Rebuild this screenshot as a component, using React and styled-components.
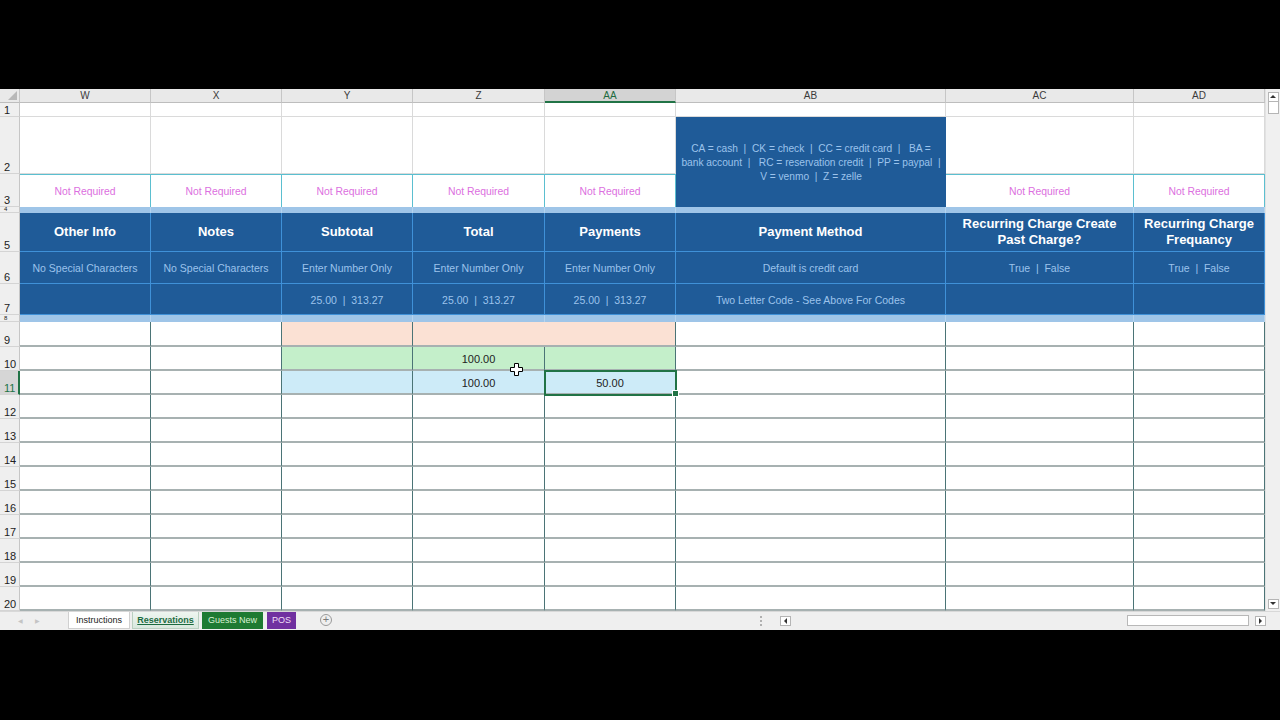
import React from 'react';
import styled, { createGlobalStyle, css } from 'styled-components';

const GlobalStyle = createGlobalStyle`
  html, body { margin: 0; padding: 0; background: #000; }
  body { font-family: "Liberation Sans", Arial, sans-serif; }
  * { box-sizing: border-box; }
`;

const COLS = ['W', 'X', 'Y', 'Z', 'AA', 'AB', 'AC', 'AD'];

const headers = [
  'Other Info', 'Notes', 'Subtotal', 'Total', 'Payments', 'Payment Method',
  'Recurring Charge Create Past Charge?', 'Recurring Charge Frequancy',
];
const hints = [
  'No Special Characters', 'No Special Characters', 'Enter Number Only', 'Enter Number Only',
  'Enter Number Only', 'Default is credit card', 'True  |  False', 'True  |  False',
];
const samples = ['', '', '25.00  |  313.27', '25.00  |  313.27', '25.00  |  313.27', 'Two Letter Code - See Above For Codes', '', ''];

const Screen = styled.div`
  width: 1280px;
  height: 720px;
  background: #000;
  padding-top: 89px;
  overflow: hidden;
`;

const Workbook = styled.div`
  position: relative;
  width: 1280px;
  height: 541px;
  background: #fff;
  display: flex;
  flex-direction: column;
`;

const SheetArea = styled.div`
  display: flex;
  height: 522px;
`;

const Grid = styled.div`
  display: grid;
  grid-template-columns: 20px 131px 131px 131px 132px 131px 270px 188px 131px;
  grid-template-rows: 14px 14px 57px 33px 6px 39px 32px 31px 7px 25px 24px 24px repeat(9, 24px);
  width: 1265px;
  overflow: hidden;
`;

const Corner = styled.div`
  background: #e9e9e9;
  border-right: 1px solid #c6c6c6;
  border-bottom: 1px solid #bdbdbd;
  position: relative;
  &::after {
    content: '';
    position: absolute;
    right: 2px;
    bottom: 2px;
    border-left: 9px solid transparent;
    border-bottom: 9px solid #b8b8b8;
  }
`;

const ColHead = styled.div`
  background: ${p => (p.$active ? '#d3d3d3' : '#e9e9e9')};
  color: ${p => (p.$active ? '#1d6b40' : '#3a3a3a')};
  border-right: 1px solid #c6c6c6;
  border-bottom: ${p => (p.$active ? '2px solid #217346' : '1px solid #bdbdbd')};
  font-size: 10px;
  display: flex;
  align-items: center;
  justify-content: center;
  line-height: 1;
  padding-top: 1px;
`;

const RowHead = styled.div`
  background: ${p => (p.$active ? '#d6d6d6' : '#efefef')};
  color: ${p => (p.$active ? '#217346' : '#222')};
  border-right: ${p => (p.$active ? '2px solid #217346' : '1px solid #c6c6c6')};
  border-bottom: 1px solid #d4d4d4;
  display: flex;
  align-items: flex-end;
  padding-left: 4px;
  overflow: hidden;
  ${p => (p.$tiny
    ? css`
        font-size: 6px;
        line-height: 5px;
      `
    : css`
        font-size: 11px;
        line-height: 12px;
      `)}
`;

const Blank = styled.div`
  border-right: 1px solid #dadada;
  border-bottom: 1px solid #dadada;
`;

const Required = styled.div`
  border-top: 1px solid #5bbfd0;
  border-right: 1px solid #5bbfd0;
  color: #dc6fe0;
  font-size: 10.4px;
  display: flex;
  align-items: center;
  justify-content: center;
`;

const Band = styled.div`
  background: #9fc5e8;
  border-right: 1px solid #b6d4ef;
`;

const NoteBlock = styled.div`
  grid-row: span 2;
  background: #1f5b98;
  color: #9cc3ec;
  font-size: 10.2px;
  line-height: 14px;
  white-space: pre;
  text-align: center;
  display: flex;
  align-items: center;
  justify-content: center;
  padding-top: 2px;
  overflow: hidden;
`;

const HeadCell = styled.div`
  background: #1f5b98;
  border-right: 1px solid #3f91d8;
  border-bottom: 1px solid #3f91d8;
  display: flex;
  align-items: center;
  justify-content: center;
  text-align: center;
  white-space: pre-wrap;
  ${p => (p.$title
    ? css`
        color: #fff;
        font-weight: bold;
        font-size: 13px;
        line-height: 16px;
        padding: 0 6px 1px;
      `
    : css`
        color: #9cc3ec;
        font-size: 10.5px;
        padding-top: 1px;
      `)}
`;

const fills = {
  peach: '#fbe1d4',
  green: '#c4efca',
  blue: '#cdebf8',
};

const BodyCell = styled.div`
  position: relative;
  background: ${p => (p.$fill ? fills[p.$fill] : '#fff')};
  grid-column: ${p => (p.$span ? `span ${p.$span}` : 'auto')};
  border-right: 1px solid #4b7476;
  border-bottom: 2px solid #a7b1b1;
  font-size: 11px;
  color: #222;
  display: flex;
  align-items: center;
  justify-content: center;
  padding-top: 1px;
  ${p => p.$selected && css`
    outline: 2px solid #217346;
    outline-offset: -1px;
    z-index: 2;
    &::after {
      content: '';
      position: absolute;
      right: -4px;
      bottom: -4px;
      width: 5px;
      height: 5px;
      background: #217346;
      border: 1px solid #fff;
    }
  `}
`;

const VScroll = styled.div`
  width: 15px;
  background: #f0f0f0;
  border-left: 1px solid #e2e2e2;
  display: flex;
  flex-direction: column;
  align-items: center;
  padding: 3px 0 2px;
`;

const ArrowBtn = styled.div`
  width: 11px;
  height: 10px;
  background: #fff;
  border: 1px solid #b5b5b5;
  display: flex;
  align-items: center;
  justify-content: center;
  flex: none;
`;

const Thumb = styled.div`
  width: 11px;
  height: 12px;
  background: #fff;
  border: 1px solid #b5b5b5;
  border-top: none;
`;

const Spacer = styled.div`
  flex: 1;
`;

const TabBar = styled.div`
  height: 19px;
  background: #efefef;
  border-top: 1px solid #d8d8d8;
  display: flex;
  align-items: flex-start;
  font-size: 9px;
`;

const NavArrows = styled.div`
  width: 68px;
  display: flex;
  align-items: center;
  gap: 12px;
  padding: 5px 0 0 18px;
  color: #c4c4c4;
  font-size: 6px;
`;

const Tab = styled.div`
  height: 17px;
  margin-left: ${p => p.$gap || 0}px;
  width: ${p => p.$w}px;
  display: flex;
  align-items: center;
  justify-content: center;
  background: ${p => p.$bg};
  color: ${p => p.$fg};
  border: 1px solid ${p => p.$edge || 'transparent'};
  border-top: none;
  font-weight: ${p => (p.$active ? 'bold' : 'normal')};
  text-decoration: ${p => (p.$active ? 'underline' : 'none')};
`;

const AddSheet = styled.div`
  margin-left: 24px;
  margin-top: 2px;
  width: 12px;
  height: 12px;
  border-radius: 50%;
  border: 1px solid #9a9a9a;
  color: #7a7a7a;
  font-size: 11px;
  line-height: 9px;
  text-align: center;
`;

const HScroll = styled.div`
  margin-left: auto;
  margin-right: 14px;
  width: 506px;
  display: flex;
  align-items: center;
  padding-top: 3px;
  gap: 6px;
`;

const Dots = styled.div`
  width: 2px;
  height: 10px;
  border-left: 2px dotted #b0b0b0;
  margin-right: 12px;
`;

const Track = styled.div`
  flex: 1;
  height: 11px;
  display: flex;
  justify-content: flex-end;
`;

const HThumb = styled.div`
  width: 122px;
  height: 11px;
  background: #fff;
  border: 1px solid #b8b8b8;
`;

const CursorMark = styled.svg`
  position: absolute;
  left: 510px;
  top: 274px;
  z-index: 5;
`;

const Tri = ({ dir }) => {
  const pts = {
    up: '1,5 4,2 7,5',
    down: '1,2 4,5 7,2',
    left: '5,1 2,4 5,7',
    right: '2,1 5,4 2,7',
  }[dir];
  return (
    <svg width="8" height="8" viewBox="0 0 8 8">
      <polygon points={pts} fill="#333" />
    </svg>
  );
};

const rowHeads = [
  { n: 1 }, { n: 2 }, { n: 3 }, { n: 4, tiny: true }, { n: 5 }, { n: 6 }, { n: 7 },
  { n: 8, tiny: true }, { n: 9 }, { n: 10 }, { n: 11, active: true },
  { n: 12 }, { n: 13 }, { n: 14 }, { n: 15 }, { n: 16 }, { n: 17 }, { n: 18 }, { n: 19 }, { n: 20 },
];

const note = 'CA = cash  |  CK = check  |  CC = credit card  |   BA =\nbank account  |   RC = reservation credit  |  PP = paypal  |\nV = venmo  |  Z = zelle';

export default function App() {
  const rh = i => {
    const r = rowHeads[i];
    return <RowHead key={`rh${r.n}`} $tiny={r.tiny} $active={r.active}>{r.n}</RowHead>;
  };

  const cells = [];
  cells.push(<Corner key="corner" />);
  COLS.forEach(c => cells.push(<ColHead key={`h${c}`} $active={c === 'AA'}>{c}</ColHead>));

  // row 1
  cells.push(rh(0));
  COLS.forEach(c => cells.push(<Blank key={`r1${c}`} />));
  // row 2 (AB merged with row 3)
  cells.push(rh(1));
  COLS.forEach(c => cells.push(
    c === 'AB' ? <NoteBlock key="note">{note}</NoteBlock> : <Blank key={`r2${c}`} />
  ));
  // row 3
  cells.push(rh(2));
  COLS.filter(c => c !== 'AB').forEach(c => cells.push(<Required key={`r3${c}`}>Not Required</Required>));
  // row 4
  cells.push(rh(3));
  COLS.forEach(c => cells.push(<Band key={`r4${c}`} />));
  // rows 5-7
  cells.push(rh(4));
  headers.forEach((t, i) => cells.push(<HeadCell key={`r5${i}`} $title>{t}</HeadCell>));
  cells.push(rh(5));
  hints.forEach((t, i) => cells.push(<HeadCell key={`r6${i}`}>{t}</HeadCell>));
  cells.push(rh(6));
  samples.forEach((t, i) => cells.push(<HeadCell key={`r7${i}`}>{t}</HeadCell>));
  // row 8
  cells.push(rh(7));
  COLS.forEach(c => cells.push(<Band key={`r8${c}`} />));
  // row 9
  cells.push(rh(8));
  cells.push(<BodyCell key="r9W" />, <BodyCell key="r9X" />, <BodyCell key="r9Y" $fill="peach" />,
    <BodyCell key="r9ZA" $fill="peach" $span={2} />, <BodyCell key="r9AB" />, <BodyCell key="r9AC" />, <BodyCell key="r9AD" />);
  // row 10
  cells.push(rh(9));
  cells.push(<BodyCell key="r10W" />, <BodyCell key="r10X" />, <BodyCell key="r10Y" $fill="green" />,
    <BodyCell key="r10Z" $fill="green">100.00</BodyCell>, <BodyCell key="r10AA" $fill="green" />,
    <BodyCell key="r10AB" />, <BodyCell key="r10AC" />, <BodyCell key="r10AD" />);
  // row 11
  cells.push(rh(10));
  cells.push(<BodyCell key="r11W" />, <BodyCell key="r11X" />, <BodyCell key="r11Y" $fill="blue" />,
    <BodyCell key="r11Z" $fill="blue">100.00</BodyCell>, <BodyCell key="r11AA" $fill="blue" $selected>50.00</BodyCell>,
    <BodyCell key="r11AB" />, <BodyCell key="r11AC" />, <BodyCell key="r11AD" />);
  // rows 12-20
  for (let i = 11; i < 20; i++) {
    cells.push(rh(i));
    COLS.forEach(c => cells.push(<BodyCell key={`r${i}${c}`} />));
  }

  return (
    <>
      <GlobalStyle />
      <Screen>
        <Workbook>
          <SheetArea>
            <Grid>{cells}</Grid>
            <VScroll>
              <ArrowBtn><Tri dir="up" /></ArrowBtn>
              <Thumb />
              <Spacer />
              <ArrowBtn><Tri dir="down" /></ArrowBtn>
            </VScroll>
          </SheetArea>
          <TabBar>
            <NavArrows><span>◀</span><span>▶</span></NavArrows>
            <Tab $w={62} $bg="#fff" $fg="#222" $edge="#d0d0d0">Instructions</Tab>
            <Tab $w={67} $gap={2} $bg="linear-gradient(#eef5f0, #d9e8de)" $fg="#1c6b3f" $edge="#b9cfc0" $active>Reservations</Tab>
            <Tab $w={61} $gap={3} $bg="#1e7a32" $fg="#d9f2d3">Guests New</Tab>
            <Tab $w={29} $gap={4} $bg="#7030a0" $fg="#efdff7">POS</Tab>
            <AddSheet>+</AddSheet>
            <HScroll>
              <Dots />
              <ArrowBtn><Tri dir="left" /></ArrowBtn>
              <Track><HThumb /></Track>
              <ArrowBtn><Tri dir="right" /></ArrowBtn>
            </HScroll>
          </TabBar>
          <CursorMark width="13" height="13" viewBox="0 0 13 13">
            <path d="M4.5 0.5h4v4h4v4h-4v4h-4v-4h-4v-4h4z" fill="#fff" stroke="#000" strokeWidth="1" />
          </CursorMark>
        </Workbook>
      </Screen>
    </>
  );
}
